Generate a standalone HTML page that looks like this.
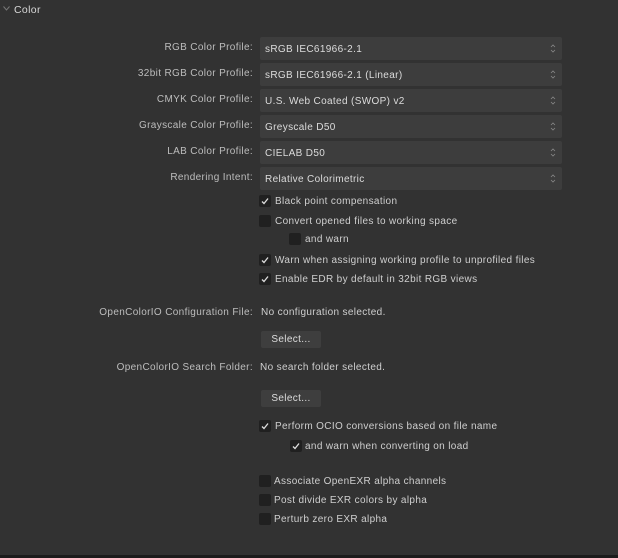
<!DOCTYPE html>
<html><head><style>
body{margin:0;width:618px;height:558px;background:#323232;font-family:"Liberation Sans",sans-serif;font-size:10px;letter-spacing:0.35px;color:#cfcfcf;position:relative;overflow:hidden}
.a{position:absolute;white-space:nowrap}
.lbl{position:absolute;right:365px;color:#bdbdbd;white-space:nowrap}
.dd{position:absolute;left:260px;width:302px;height:23px;background:#3d3d3d;border-radius:2px;box-sizing:border-box;padding-left:5px;line-height:25px;color:#dcdcdc}
.ar{position:absolute;right:6px;top:6px}
.cb{position:absolute;width:12px;height:12px;background:#202020;border-radius:2px}
.cb svg{position:absolute;left:2px;top:2px}
.btn{position:absolute;left:261px;width:60px;height:17px;background:#3e3e3e;border-radius:2px;text-align:center;line-height:18px;color:#ddd}
</style></head><body>
<svg class="a" style="left:3px;top:6px" width="7" height="5"><path d="M0.5 0.5L3.5 4L6.5 0.5" fill="none" stroke="#777" stroke-width="1"/></svg>
<div class="a" style="left:14px;top:4px;color:#d8d8d8;font-size:10.5px">Color</div>
<div class="a" style="left:0;top:555px;width:618px;height:3px;background:#1c1c1c"></div>

<div class="lbl" style="top:42px">RGB Color Profile:</div>
<div class="dd" style="top:37px">sRGB IEC61966-2.1<svg class="ar" width="6" height="11"><path d="M1 4L3 2L5 4M1 7L3 9L5 7" fill="none" stroke="#888" stroke-width="0.8"/></svg></div>
<div class="lbl" style="top:68px">32bit RGB Color Profile:</div>
<div class="dd" style="top:63px">sRGB IEC61966-2.1 (Linear)<svg class="ar" width="6" height="11"><path d="M1 4L3 2L5 4M1 7L3 9L5 7" fill="none" stroke="#888" stroke-width="0.8"/></svg></div>
<div class="lbl" style="top:94px">CMYK Color Profile:</div>
<div class="dd" style="top:89px">U.S. Web Coated (SWOP) v2<svg class="ar" width="6" height="11"><path d="M1 4L3 2L5 4M1 7L3 9L5 7" fill="none" stroke="#888" stroke-width="0.8"/></svg></div>
<div class="lbl" style="top:120px">Grayscale Color Profile:</div>
<div class="dd" style="top:115px">Greyscale D50<svg class="ar" width="6" height="11"><path d="M1 4L3 2L5 4M1 7L3 9L5 7" fill="none" stroke="#888" stroke-width="0.8"/></svg></div>
<div class="lbl" style="top:146px">LAB Color Profile:</div>
<div class="dd" style="top:141px">CIELAB D50<svg class="ar" width="6" height="11"><path d="M1 4L3 2L5 4M1 7L3 9L5 7" fill="none" stroke="#888" stroke-width="0.8"/></svg></div>
<div class="lbl" style="top:172px">Rendering Intent:</div>
<div class="dd" style="top:167px">Relative Colorimetric<svg class="ar" width="6" height="11"><path d="M1 4L3 2L5 4M1 7L3 9L5 7" fill="none" stroke="#888" stroke-width="0.8"/></svg></div>

<div class="cb" style="left:259px;top:195px"><svg width="8" height="8"><path d="M1 4.5L3 6.5L7 1.5" fill="none" stroke="#ddd" stroke-width="1.3"/></svg></div><div class="a" style="left:275px;top:196px">Black point compensation</div>
<div class="cb" style="left:259px;top:215px"></div><div class="a" style="left:275px;top:216px">Convert opened files to working space</div>
<div class="cb" style="left:289px;top:233px"></div><div class="a" style="left:305px;top:234px">and warn</div>
<div class="cb" style="left:259px;top:254px"><svg width="8" height="8"><path d="M1 4.5L3 6.5L7 1.5" fill="none" stroke="#ddd" stroke-width="1.3"/></svg></div><div class="a" style="left:275px;top:255px">Warn when assigning working profile to unprofiled files</div>
<div class="cb" style="left:259px;top:273px"><svg width="8" height="8"><path d="M1 4.5L3 6.5L7 1.5" fill="none" stroke="#ddd" stroke-width="1.3"/></svg></div><div class="a" style="left:275px;top:274px">Enable EDR by default in 32bit RGB views</div>

<div class="lbl" style="top:307px">OpenColorIO Configuration File:</div>
<div class="a" style="left:261px;top:307px">No configuration selected.</div>
<div class="btn" style="top:331px">Select...</div>
<div class="lbl" style="top:362px">OpenColorIO Search Folder:</div>
<div class="a" style="left:260px;top:362px">No search folder selected.</div>
<div class="btn" style="top:390px">Select...</div>

<div class="cb" style="left:259px;top:420px"><svg width="8" height="8"><path d="M1 4.5L3 6.5L7 1.5" fill="none" stroke="#ddd" stroke-width="1.3"/></svg></div><div class="a" style="left:275px;top:421px">Perform OCIO conversions based on file name</div>
<div class="cb" style="left:290px;top:440px"><svg width="8" height="8"><path d="M1 4.5L3 6.5L7 1.5" fill="none" stroke="#ddd" stroke-width="1.3"/></svg></div><div class="a" style="left:305px;top:441px">and warn when converting on load</div>
<div class="cb" style="left:259px;top:475px"></div><div class="a" style="left:274px;top:476px">Associate OpenEXR alpha channels</div>
<div class="cb" style="left:259px;top:494px"></div><div class="a" style="left:274px;top:495px">Post divide EXR colors by alpha</div>
<div class="cb" style="left:259px;top:513px"></div><div class="a" style="left:274px;top:514px">Perturb zero EXR alpha</div>
</body></html>
